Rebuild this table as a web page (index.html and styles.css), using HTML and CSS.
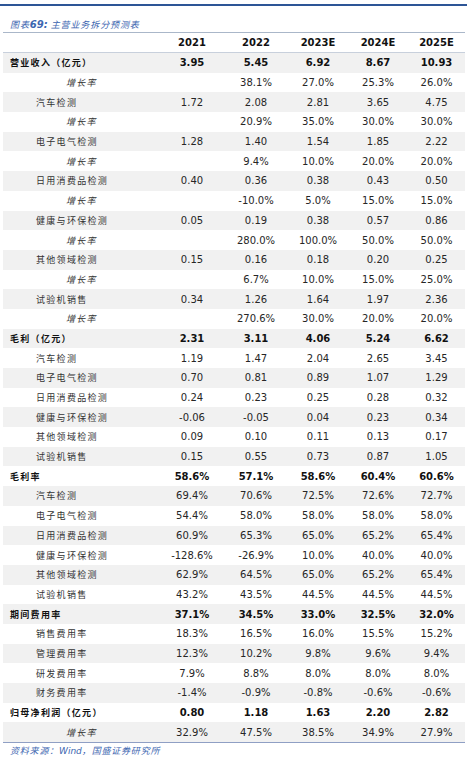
FILE: index.html
```html
<!DOCTYPE html>
<html lang="zh">
<head>
<meta charset="utf-8">
<link rel="stylesheet" href="styles.css">
</head>
<body>
<div class="page">
  <div class="topline"></div>
  <div class="title"><span class="fig">图表<b>69:</b></span> 主营业务拆分预测表</div>
  <div class="table">
    <div class="row head"><div class="lbl"></div><div>2021</div><div>2022</div><div>2023E</div><div>2024E</div><div>2025E</div></div>

    <div class="row alt strong"><div class="lbl l0">营业收入（亿元）</div><div>3.95</div><div>5.45</div><div>6.92</div><div>8.67</div><div>10.93</div></div>
    <div class="row"><div class="lbl l2">增长率</div><div></div><div>38.1%</div><div>27.0%</div><div>25.3%</div><div>26.0%</div></div>
    <div class="row alt"><div class="lbl l1">汽车检测</div><div>1.72</div><div>2.08</div><div>2.81</div><div>3.65</div><div>4.75</div></div>
    <div class="row"><div class="lbl l2">增长率</div><div></div><div>20.9%</div><div>35.0%</div><div>30.0%</div><div>30.0%</div></div>
    <div class="row alt"><div class="lbl l1">电子电气检测</div><div>1.28</div><div>1.40</div><div>1.54</div><div>1.85</div><div>2.22</div></div>
    <div class="row"><div class="lbl l2">增长率</div><div></div><div>9.4%</div><div>10.0%</div><div>20.0%</div><div>20.0%</div></div>
    <div class="row alt"><div class="lbl l1">日用消费品检测</div><div>0.40</div><div>0.36</div><div>0.38</div><div>0.43</div><div>0.50</div></div>
    <div class="row"><div class="lbl l2">增长率</div><div></div><div>-10.0%</div><div>5.0%</div><div>15.0%</div><div>15.0%</div></div>
    <div class="row alt"><div class="lbl l1">健康与环保检测</div><div>0.05</div><div>0.19</div><div>0.38</div><div>0.57</div><div>0.86</div></div>
    <div class="row"><div class="lbl l2">增长率</div><div></div><div>280.0%</div><div>100.0%</div><div>50.0%</div><div>50.0%</div></div>
    <div class="row alt"><div class="lbl l1">其他领域检测</div><div>0.15</div><div>0.16</div><div>0.18</div><div>0.20</div><div>0.25</div></div>
    <div class="row"><div class="lbl l2">增长率</div><div></div><div>6.7%</div><div>10.0%</div><div>15.0%</div><div>25.0%</div></div>
    <div class="row alt"><div class="lbl l1">试验机销售</div><div>0.34</div><div>1.26</div><div>1.64</div><div>1.97</div><div>2.36</div></div>
    <div class="row"><div class="lbl l2">增长率</div><div></div><div>270.6%</div><div>30.0%</div><div>20.0%</div><div>20.0%</div></div>

    <div class="row alt strong"><div class="lbl l0">毛利（亿元）</div><div>2.31</div><div>3.11</div><div>4.06</div><div>5.24</div><div>6.62</div></div>
    <div class="row"><div class="lbl l1">汽车检测</div><div>1.19</div><div>1.47</div><div>2.04</div><div>2.65</div><div>3.45</div></div>
    <div class="row alt"><div class="lbl l1">电子电气检测</div><div>0.70</div><div>0.81</div><div>0.89</div><div>1.07</div><div>1.29</div></div>
    <div class="row"><div class="lbl l1">日用消费品检测</div><div>0.24</div><div>0.23</div><div>0.25</div><div>0.28</div><div>0.32</div></div>
    <div class="row alt"><div class="lbl l1">健康与环保检测</div><div>-0.06</div><div>-0.05</div><div>0.04</div><div>0.23</div><div>0.34</div></div>
    <div class="row"><div class="lbl l1">其他领域检测</div><div>0.09</div><div>0.10</div><div>0.11</div><div>0.13</div><div>0.17</div></div>
    <div class="row alt"><div class="lbl l1">试验机销售</div><div>0.15</div><div>0.55</div><div>0.73</div><div>0.87</div><div>1.05</div></div>

    <div class="row strong"><div class="lbl l0">毛利率</div><div>58.6%</div><div>57.1%</div><div>58.6%</div><div>60.4%</div><div>60.6%</div></div>
    <div class="row alt"><div class="lbl l1">汽车检测</div><div>69.4%</div><div>70.6%</div><div>72.5%</div><div>72.6%</div><div>72.7%</div></div>
    <div class="row"><div class="lbl l1">电子电气检测</div><div>54.4%</div><div>58.0%</div><div>58.0%</div><div>58.0%</div><div>58.0%</div></div>
    <div class="row alt"><div class="lbl l1">日用消费品检测</div><div>60.9%</div><div>65.3%</div><div>65.0%</div><div>65.2%</div><div>65.4%</div></div>
    <div class="row"><div class="lbl l1">健康与环保检测</div><div>-128.6%</div><div>-26.9%</div><div>10.0%</div><div>40.0%</div><div>40.0%</div></div>
    <div class="row alt"><div class="lbl l1">其他领域检测</div><div>62.9%</div><div>64.5%</div><div>65.0%</div><div>65.2%</div><div>65.4%</div></div>
    <div class="row"><div class="lbl l1">试验机销售</div><div>43.2%</div><div>43.5%</div><div>44.5%</div><div>44.5%</div><div>44.5%</div></div>

    <div class="row alt strong"><div class="lbl l0">期间费用率</div><div>37.1%</div><div>34.5%</div><div>33.0%</div><div>32.5%</div><div>32.0%</div></div>
    <div class="row"><div class="lbl l1">销售费用率</div><div>18.3%</div><div>16.5%</div><div>16.0%</div><div>15.5%</div><div>15.2%</div></div>
    <div class="row alt"><div class="lbl l1">管理费用率</div><div>12.3%</div><div>10.2%</div><div>9.8%</div><div>9.6%</div><div>9.4%</div></div>
    <div class="row"><div class="lbl l1">研发费用率</div><div>7.9%</div><div>8.8%</div><div>8.0%</div><div>8.0%</div><div>8.0%</div></div>
    <div class="row alt"><div class="lbl l1">财务费用率</div><div>-1.4%</div><div>-0.9%</div><div>-0.8%</div><div>-0.6%</div><div>-0.6%</div></div>

    <div class="row strong"><div class="lbl l0">归母净利润（亿元）</div><div>0.80</div><div>1.18</div><div>1.63</div><div>2.20</div><div>2.82</div></div>
    <div class="row alt last"><div class="lbl l2">增长率</div><div>32.9%</div><div>47.5%</div><div>38.5%</div><div>34.9%</div><div>27.9%</div></div>
  </div>
  <div class="source">资料来源：<span class="wind">Wind</span>，国盛证券研究所</div>
</div>
</body>
</html>
```

FILE: styles.css
```css
html, body {
  margin: 0;
  padding: 0;
  background: #ffffff;
}

.page {
  width: 474px;
  padding-top: 4px;
}

.topline {
  width: 467px;
  height: 2px;
  background: #2d5596;
}

.title {
  height: 26px;
  box-sizing: border-box;
  padding: 13px 0 0 10px;
  font-family: "Noto Sans CJK SC", sans-serif;
  font-size: 9px;
  line-height: 12px;
  letter-spacing: 0.9px;
  font-style: italic;
  color: #3c66b0;
}

.title .fig b {
  font-family: "DejaVu Sans", sans-serif;
  font-weight: bold;
  font-size: 10px;
  letter-spacing: 0;
}

.table {
  margin-left: 3px;
  width: 462px;
  border-top: 1px solid #aab7c9;
}

.row {
  display: grid;
  grid-template-columns: 157px 64px 64px 60px 60px 57px;
  height: 19.7px;
  align-items: center;
  font-family: "DejaVu Sans", sans-serif;
  font-size: 10px;
  color: #262626;
  text-align: center;
}

.row.head {
  height: 19px;
  border-bottom: 1px solid #c8d0dc;
  font-weight: bold;
  color: #111;
}

.row.alt {
  background: #f1f1f1;
}

.row.strong {
  font-weight: bold;
  color: #111;
}

.row.last {
  border-bottom: 1px solid #8f9fc4;
}

.lbl {
  text-align: left;
  font-family: "Noto Sans CJK SC", sans-serif;
  font-size: 9px;
  letter-spacing: 1.3px;
  color: #333;
  white-space: nowrap;
}

.strong .lbl.l0 {
  font-weight: bold;
  color: #111;
}

.l0 { padding-left: 7px; }
.l1 { padding-left: 33px; }
.l2 { padding-left: 63px; font-style: italic; }

.source {
  padding: 2px 0 0 10px;
  font-family: "Noto Sans CJK SC", sans-serif;
  font-size: 9px;
  line-height: 12px;
  letter-spacing: 0.8px;
  font-style: italic;
  color: #3c66b0;
}

.source .wind {
  font-family: "DejaVu Sans", sans-serif;
  letter-spacing: 0;
}
```
